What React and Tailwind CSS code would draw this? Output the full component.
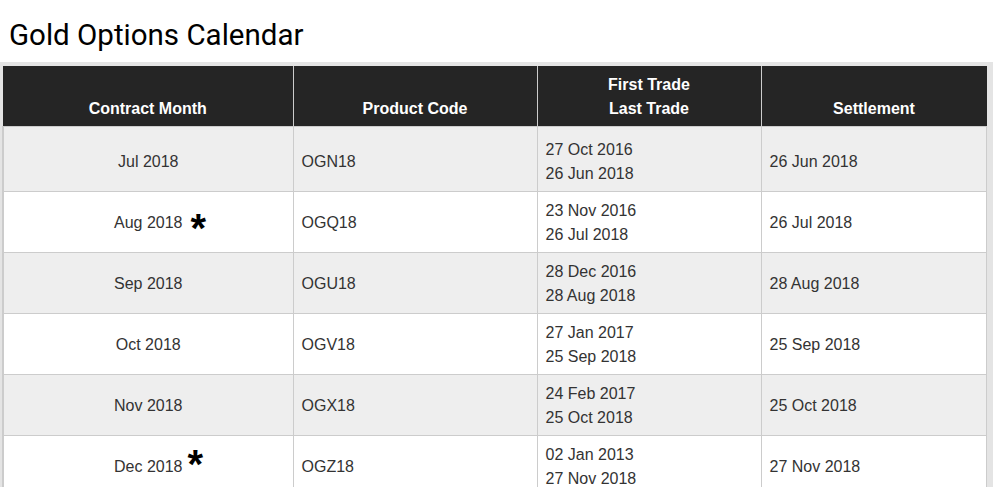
export default function App() {
  const rows = [
    { m: "Jul 2018", star: null, code: "OGN18", f: "27 Oct 2016", l: "26 Jun 2018", s: "26 Jun 2018" },
    { m: "Aug 2018", star: "mid", code: "OGQ18", f: "23 Nov 2016", l: "26 Jul 2018", s: "26 Jul 2018" },
    { m: "Sep 2018", star: null, code: "OGU18", f: "28 Dec 2016", l: "28 Aug 2018", s: "28 Aug 2018" },
    { m: "Oct 2018", star: null, code: "OGV18", f: "27 Jan 2017", l: "25 Sep 2018", s: "25 Sep 2018" },
    { m: "Nov 2018", star: null, code: "OGX18", f: "24 Feb 2017", l: "25 Oct 2018", s: "25 Oct 2018" },
    { m: "Dec 2018", star: "sup", code: "OGZ18", f: "02 Jan 2013", l: "27 Nov 2018", s: "27 Nov 2018" },
  ];
  return (
    <div className="w-[993px] h-[504px] bg-white overflow-hidden" style={{ fontFamily: '"Liberation Sans", Arial, sans-serif' }}>
      <h1
        className="pl-[9px] pt-[18px] text-[29.5px] leading-[34px] font-normal text-black"
        style={{ fontFamily: "Roboto, sans-serif" }}
      >
        Gold Options Calendar
      </h1>
      <div className="mt-[10px] h-[425px] overflow-hidden bg-[#e4e4e4] pl-[2px] pr-[6px] pt-[4px]">
        <table className="w-full table-fixed border-collapse text-[16px]">
          <colgroup>
            <col className="w-[290px]" />
            <col className="w-[244px]" />
            <col className="w-[224px]" />
            <col />
          </colgroup>
          <thead>
            <tr className="h-[60px] bg-[#252525] text-white">
              <th className="border-r border-[#cccccc] align-bottom pb-[5px] font-bold leading-[24px] text-center">Contract Month</th>
              <th className="border-r border-[#cccccc] align-bottom pb-[5px] font-bold leading-[24px] text-center">Product Code</th>
              <th className="border-r border-[#cccccc] align-bottom pb-[5px] font-bold leading-[24px] text-center">
                First Trade
                <br />
                Last Trade
              </th>
              <th className="align-bottom pb-[5px] font-bold leading-[24px] text-center">Settlement</th>
            </tr>
          </thead>
          <tbody className="text-[#333333]">
            {rows.map((r, i) => {
              const pad = i === 0 ? "pt-[6px]" : "pt-[2px]";
              return (
                <tr
                  key={r.code}
                  className={`${i === 0 ? "h-[65px]" : "h-[61px]"} ${i % 2 === 0 ? "bg-[#eeeeee]" : "bg-white"}`}
                >
                  <td className={`border border-[#cccccc] border-l-[2px] text-center align-middle leading-[24px] ${pad}`}>
                    {r.m}
                    {r.star && (
                      <span className="relative inline-block w-0">
                        <span
                          className={`absolute ${r.star === "mid" ? "left-[8px] top-[-20px]" : "left-[5px] top-[-28px]"} text-[40px] font-bold leading-none text-black`}
                        >
                          *
                        </span>
                      </span>
                    )}
                  </td>
                  <td className={`border border-[#cccccc] pl-[8px] align-middle leading-[24px] ${pad}`}>{r.code}</td>
                  <td className={`border border-[#cccccc] pl-[8px] align-middle leading-[24px] ${pad}`}>
                    {r.f}
                    <br />
                    {r.l}
                  </td>
                  <td className={`border border-[#cccccc] pl-[8px] align-middle leading-[24px] ${pad}`}>{r.s}</td>
                </tr>
              );
            })}
          </tbody>
        </table>
      </div>
    </div>
  );
}
